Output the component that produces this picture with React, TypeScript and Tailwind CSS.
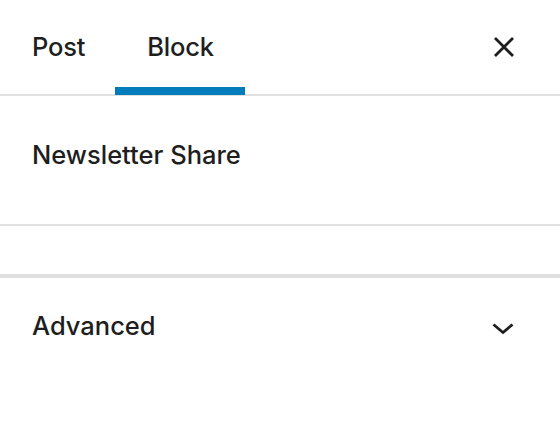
import React from "react";

export default function App() {
  return (
    <div className="w-[560px] h-[448px] bg-white text-[#1e1e1e] overflow-hidden" style={{ fontFamily: "Inter, 'Noto Sans', sans-serif" }}>
      <div className="flex items-stretch h-[96px] border-b-2 border-[#e0e0e0]">
        <div className="relative flex items-center pl-8 pr-[30px] text-[25.5px] font-medium tracking-[-0.2px]">
          Post
        </div>
        <div className="relative flex items-center pl-8 pr-[31px] text-[25.5px] font-medium tracking-[-0.2px]">
          Block
          <div className="absolute left-0 right-0 bottom-[-1px] h-[8px] bg-[#007cba]" />
        </div>
        <div className="flex-1" />
        <div className="flex items-center pr-[46px]">
          <svg width="20" height="20" viewBox="0 0 20 20">
            <path d="M1 1 L19 19 M19 1 L1 19" stroke="#1e1e1e" strokeWidth="2.8" fill="none" />
          </svg>
        </div>
      </div>
      <div className="h-[130px] px-8 pt-[40px] border-b-2 border-[#e0e0e0]">
        <div className="text-[25.5px] font-medium">Newsletter Share</div>
      </div>
      <div className="h-[50px] border-b-2 border-[#e0e0e0]" />
      <div className="border-t-2 border-[#e0e0e0] h-[98px] flex items-center justify-between pl-8 pr-[46px]">
        <div className="text-[25.5px] font-medium">Advanced</div>
        <svg width="22" height="12" viewBox="0 0 22 12" className="mt-[5px]">
          <path d="M1.5 1.5 L11 9.5 L20.5 1.5" stroke="#1e1e1e" strokeWidth="2.8" fill="none" />
        </svg>
      </div>
    </div>
  );
}
